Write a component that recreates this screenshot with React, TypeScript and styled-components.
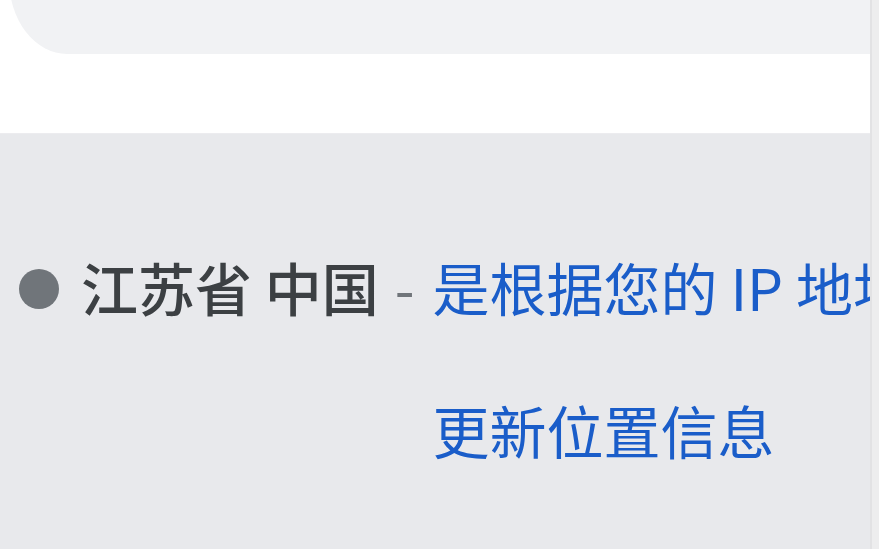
import styled, { createGlobalStyle } from 'styled-components'

const GlobalStyle = createGlobalStyle`
  html, body {
    margin: 0;
    padding: 0;
    background: #ffffff;
    overflow: hidden;
  }
  body {
    font-family: "Noto Sans CJK SC", "Noto Sans", sans-serif;
  }
`

const Page = styled.div`
  display: flex;
  width: 879px;
  height: 549px;
`

const Main = styled.div`
  flex: 1;
  display: flex;
  flex-direction: column;
  overflow: hidden;
  min-width: 0;
`

const Scrollbar = styled.div`
  width: 7px;
  border-left: 2px solid #e2e2e4;
  background: #ededee;
`

const TopArea = styled.div`
  height: 133px;
  background: #ffffff;
  border-bottom: 1px solid #ececef;
`

const SearchCard = styled.div`
  margin-top: -21px;
  margin-left: 9px;
  height: 75px;
  background: #f1f2f4;
  border-bottom-left-radius: 58px 75px;
`

const Footer = styled.footer`
  flex: 1;
  background: #e8e9ec;
  padding-top: 120px;
`

const LocationRow = styled.div`
  display: flex;
  align-items: flex-start;
  padding-left: 19px;
  font-size: 57px;
  line-height: 64px;
  white-space: nowrap;
`

const Dot = styled.span`
  flex: none;
  width: 40px;
  height: 40px;
  margin-top: 15px;
  margin-right: 22px;
  border-radius: 50%;
  background: #70757a;
`

const Place = styled.span`
  color: #3c4043;
  font-weight: 500;
`

const Separator = styled.span`
  color: #70757a;
  padding: 0 18px 0 16px;
`

const Links = styled.div`
  display: flex;
  flex-direction: column;
  gap: 79px;
`

const Link = styled.a`
  color: #1a5dc9;
  text-decoration: none;
  cursor: pointer;
`

export default function App() {
  return (
    <Page>
      <GlobalStyle />
      <Main>
        <TopArea>
          <SearchCard />
        </TopArea>
        <Footer>
          <LocationRow>
            <Dot />
            <Place>江苏省 中国</Place>
            <Separator>-</Separator>
            <Links>
              <Link>是根据您的 IP 地址</Link>
              <Link>更新位置信息</Link>
            </Links>
          </LocationRow>
        </Footer>
      </Main>
      <Scrollbar />
    </Page>
  )
}
